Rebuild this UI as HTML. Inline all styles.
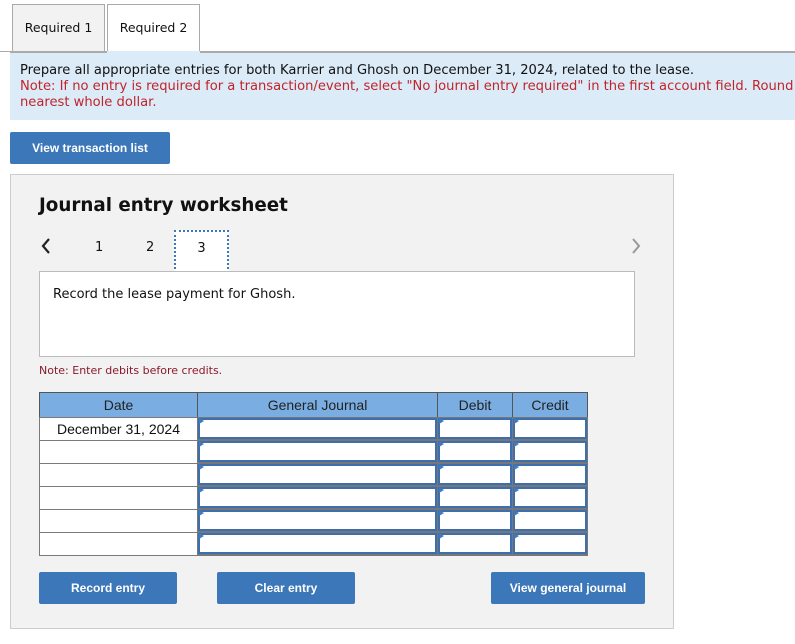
<!DOCTYPE html>
<html><head><style>
*{margin:0;padding:0;box-sizing:border-box}
html,body{width:795px;height:644px;overflow:hidden}
body{background:#fff;position:relative;font-family:"DejaVu Sans","Liberation Sans",sans-serif;color:#111}
.a{position:absolute}
.tab{position:absolute;top:4px;height:48px;border:1px solid #aaa;font-size:12.5px;line-height:46px;text-align:center}
.btn{position:absolute;background:#3b77b9;color:#fff;font-family:"Liberation Sans",sans-serif;font-weight:bold;font-size:12px;text-align:center;border-radius:2px}
.cell{position:absolute;background:#fff;border:1px solid #7a7a7a}
.inp{position:absolute;background:#fff;border:2px solid #3d6fae}
.tri{position:absolute;width:0;height:0;border-top:3px solid transparent;border-bottom:3px solid transparent;border-left:5px solid #3d7ac0}
.hd{position:absolute;top:392px;height:26px;background:#7aaee3;border:1px solid #555;font-family:"Liberation Sans",sans-serif;font-size:14px;line-height:24px;text-align:center;color:#222}
</style></head><body>
<div class="tab" style="left:12px;width:93px;background:#f2f2f2;border-bottom:none">Required 1</div>
<div class="tab" style="left:107px;width:93px;background:#fff;border-bottom:none;height:48px">Required 2</div>
<div class="a" style="left:0;top:51px;width:795px;height:1px;background:#aaa"></div>
<div class="a" style="left:10px;top:52px;width:785px;height:68px;background:#dcebf8"></div>
<div class="a" style="left:10px;top:52px;width:785px;height:1px;background:#aaa"></div>
<div class="a" style="left:107px;top:51px;width:93px;height:2px;background:#dcebf8"></div>
<div class="a" style="left:20px;top:63px;width:775px;overflow:hidden;font-size:13.1px;white-space:nowrap;line-height:16px">Prepare all appropriate entries for both Karrier and Ghosh on December 31, 2024, related to the lease.<br><span style="color:#c0242a">Note: If no entry is required for a transaction/event, select "No journal entry required" in the first account field. Round your answers to the<br>nearest whole dollar.</span></div>
<div class="btn" style="left:10px;top:132px;width:160px;height:32px;line-height:32px">View transaction list</div>
<div class="a" style="left:10px;top:174px;width:664px;height:455px;background:#f2f2f2;border:1px solid #ccc"></div>
<div class="a" style="left:39px;top:195px;font-size:18.3px;font-weight:bold">Journal entry worksheet</div>
<svg class="a" style="left:40px;top:237px" width="12" height="18"><path d="M9 2L3 9L9 16" stroke="#222" stroke-width="2.2" fill="none"/></svg>
<div class="a" style="left:95px;top:240px;font-size:13px">1</div>
<div class="a" style="left:146px;top:240px;font-size:13px">2</div>
<div class="a" style="left:174px;top:230px;width:55px;height:43px;background:#fff;border:2px dotted #3b77b9;font-size:13px;text-align:center;line-height:34px">3</div>
<svg class="a" style="left:630px;top:237px" width="12" height="18"><path d="M3 2L9 9L3 16" stroke="#999" stroke-width="2" fill="none"/></svg>
<div class="a" style="left:39px;top:271px;width:596px;height:86px;background:#fff;border:1px solid #bbb"></div>
<div class="a" style="left:53px;top:287px;font-size:13px">Record the lease payment for Ghosh.</div>
<div class="a" style="left:39px;top:364px;font-size:11px;color:#8a1a2a">Note: Enter debits before credits.</div>
<div class="hd" style="left:39px;width:159px">Date</div>
<div class="hd" style="left:197px;width:241px">General Journal</div>
<div class="hd" style="left:437px;width:76px">Debit</div>
<div class="hd" style="left:512px;width:76px">Credit</div>
<div class="cell" style="left:39px;top:417px;width:159px;height:24px;font-family:'Liberation Sans',sans-serif;font-size:14px;text-align:center;line-height:23px">December 31, 2024</div>
<div class="cell" style="left:39px;top:440px;width:159px;height:24px"></div>
<div class="cell" style="left:39px;top:463px;width:159px;height:24px"></div>
<div class="cell" style="left:39px;top:486px;width:159px;height:24px"></div>
<div class="cell" style="left:39px;top:509px;width:159px;height:24px"></div>
<div class="cell" style="left:39px;top:532px;width:159px;height:24px"></div>
<div class="a" style="left:197px;top:417px;width:391px;height:139px;background:#777"></div>
<div id="rows"></div>
<script>
var h='';for(var i=0;i<6;i++){var y=418+i*23;
[[198,239],[438,74],[513,74]].forEach(function(c){h+='<div class="inp" style="left:'+c[0]+'px;top:'+y+'px;width:'+c[1]+'px;height:21px"></div><div class="tri" style="left:'+(c[0]+1)+'px;top:'+(y)+'px"></div>';});}
document.getElementById('rows').innerHTML=h;
</script>
<div class="btn" style="left:39px;top:572px;width:138px;height:32px;line-height:32px">Record entry</div>
<div class="btn" style="left:217px;top:572px;width:138px;height:32px;line-height:32px">Clear entry</div>
<div class="btn" style="left:491px;top:572px;width:154px;height:32px;line-height:32px">View general journal</div>
</body></html>
